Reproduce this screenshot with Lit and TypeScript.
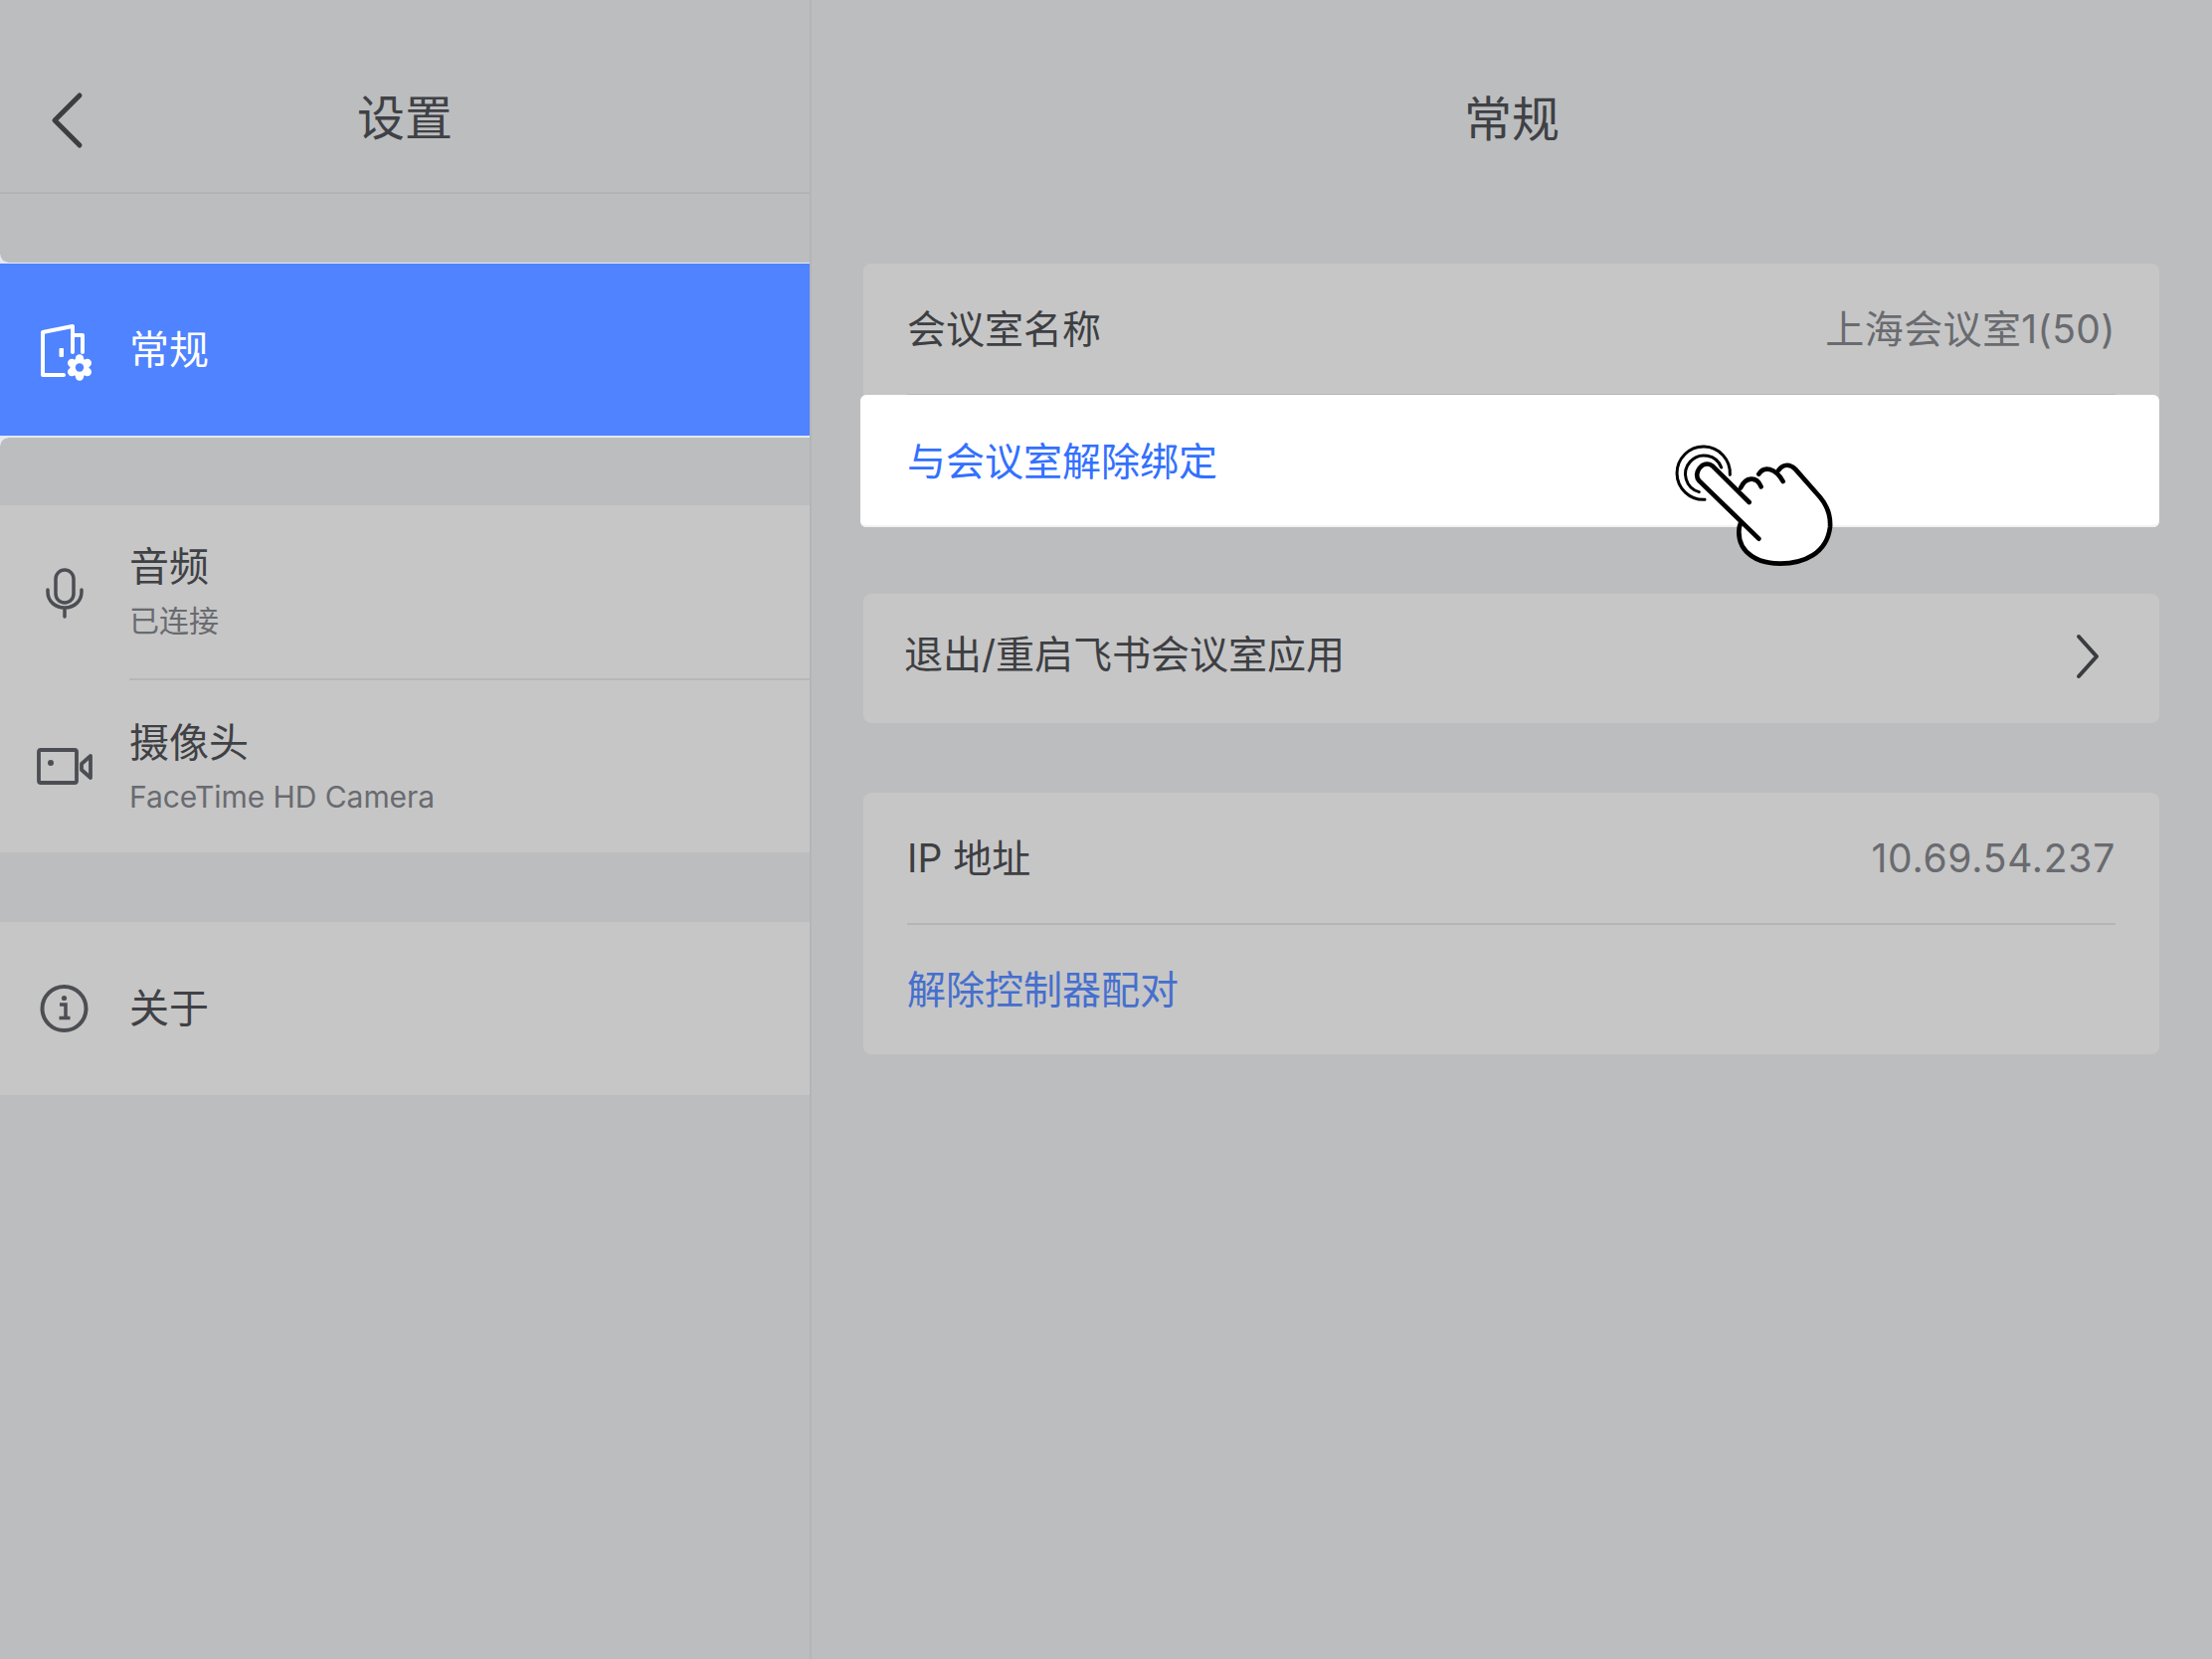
import { LitElement, html, css, svg } from "lit";
import { customElement } from "lit/decorators.js";

const gearLobes = [90, 30, -30, -90, -150, 150].map((a) => {
  const r = (a * Math.PI) / 180;
  return svg`<circle cx=${60 + 9 * Math.cos(r)} cy=${67.5 + 9 * Math.sin(r)} r="4.2" fill="currentColor"/>`;
});
const door = svg`<path d="M44 75H23V32L53 26V52M54 35H63V52" fill="none" stroke="currentColor" stroke-width="4" stroke-linejoin="round" stroke-linecap="round"/><rect x="39.5" y="48" width="4.5" height="9" rx="1" fill="currentColor"/>${gearLobes}<circle cx="60" cy="67.5" r="9.5" fill="currentColor"/><circle cx="60" cy="67.5" r="4.2" fill="#4f83ff"/>`;
const mic = svg`<g fill="none" stroke="currentColor" stroke-width="3.5" stroke-linecap="round"><rect x="36" y="28" width="18" height="33" rx="9"/><path d="M28 48V50C28 59 35 66 45 66C55 66 62 59 62 50V48M45 66V75"/></g>`;
const cam = svg`<g fill="none" stroke="currentColor" stroke-width="3.8" stroke-linejoin="round"><rect x="19" y="34" width="38" height="33" rx="2"/><path d="M71 40L62 48V54L71 62Z"/></g><circle cx="31" cy="47" r="3" fill="currentColor"/>`;
const info = svg`<circle cx="44.5" cy="50" r="22" fill="none" stroke="currentColor" stroke-width="4"/><circle cx="44.5" cy="39.5" r="2.6" fill="currentColor"/><path d="M40 46H46V59M39.5 59.5H50.5" fill="none" stroke="currentColor" stroke-width="3.5"/>`;

@customElement("app-root")
export class AppRoot extends LitElement {
  static styles = css`
    :host {
      display: grid;
      grid-template-columns: 814px 2px 1fr;
      width: 2224px;
      height: 1668px;
      background: #bcbdbf;
      color: #3d3f43;
      font-family: Inter, "Noto Sans CJK SC", sans-serif;
      font-size: 40px;
      overflow: hidden;
    }
    .rule { background: #b4b5b7; }
    .head {
      height: 195px;
      box-sizing: border-box;
      display: flex;
      align-items: center;
      justify-content: center;
      position: relative;
      font-size: 48px;
      padding-top: 36px;
      color: #3f4145;
    }
    .side .head { border-bottom: 2px solid #b2b3b5; }
    .back { position: absolute; left: 50px; top: 92px; width: 36px; height: 58px; color: #3c3e42; }
    .nav { display: flex; flex-direction: column; gap: 70px; padding-top: 70px; }
    .group { background: #c6c6c6; }
    .blue { background: none; }
    .item {
      height: 173px;
      display: flex;
      align-items: center;
      padding-left: 20px;
      gap: 20px;
      color: #3f4145;
    }
    .item.first { height: 174px; }
    .item.second { height: 175px; }
    .item.last { height: 174px; }
    .item.on {
      background: #4f83ff;
      color: #fff;
      box-shadow: 0 -1px 0 #e4e9f3, 0 2px 0 #e4e9f3;
      position: relative;
    }
    .item.on::before,
    .item.on::after {
      content: "";
      position: absolute;
      left: 0;
      width: 8px;
      height: 8px;
    }
    .item.on::before {
      top: -9px;
      background: radial-gradient(circle at 100% 0, transparent 7px, #e4e9f3 8px);
    }
    .item.on::after {
      bottom: -10px;
      background: radial-gradient(circle at 100% 100%, transparent 7px, #e4e9f3 8px);
    }
    .ico { width: 90px; height: 100px; flex: none; color: #4c4e53; display: block; }
    .on .ico { color: #fff; }
    .labels { display: flex; flex-direction: column; flex: 1; align-self: stretch; justify-content: center; gap: 10px; line-height: 48px; }
    .bordered { border-top: 2px solid #b6b7b8; padding-top: 2px; }
    .sub { font-size: 30px; line-height: 40px; color: #696b70; letter-spacing: -0.05px; }
    .cards { display: flex; flex-direction: column; padding: 70px 53px 0 52px; font-size: 39px; }
    .card { background: #c6c6c6; border-radius: 8px; display: flex; flex-direction: column; }
    .c1 { margin-bottom: 68px; }
    .c2 { margin-bottom: 70px; }
    .row {
      height: 131px;
      box-sizing: border-box;
      display: flex;
      align-items: center;
      justify-content: space-between;
      padding: 0 44px 6px;
      flex: none;
    }
    .row.short { height: 130px; padding: 0 58px 0 41px; }
    .row.short .txt { margin-bottom: 14px; }
    .row.short .chev { margin-bottom: 4px; }
    .line { height: 2px; background: #b4b5b6; margin: 0 44px; }
    .val { color: #696b70; font-size: 39px; letter-spacing: 0.4px; }
    .val.ip { letter-spacing: 0.75px; margin-top: 6px; }
    .pressed {
      background: #fff;
      margin: -1px 0 -1px -3px;
      height: 133px;
      border-radius: 6px;
      padding-left: 47px;
      color: #3370ff;
      box-shadow: inset 0 -2px 0 #f2f2f3;
    }
    .link { color: #456fce; height: 130px; }
    .chev { width: 28px; height: 48px; color: #3a3c40; }
    .hand { position: absolute; left: 1640px; top: 420px; width: 240px; height: 170px; }
  `;

  render() {
    return html`
      <div class="side">
        <div class="head">
          <svg class="back" viewBox="0 0 36 58"><path d="M30 4L5 29L30 54" fill="none" stroke="currentColor" stroke-width="5" stroke-linecap="round" stroke-linejoin="round"/></svg>
          设置
        </div>
        <div class="nav">
          <div class="group blue">
            <div class="item on"><svg class="ico" viewBox="0 0 90 100">${door}</svg><div class="labels">常规</div></div>
          </div>
          <div class="group">
            <div class="item first">
              <svg class="ico" viewBox="0 0 90 100">${mic}</svg>
              <div class="labels"><span>音频</span><span class="sub">已连接</span></div>
            </div>
            <div class="item second">
              <svg class="ico" viewBox="0 0 90 100">${cam}</svg>
              <div class="labels bordered"><span>摄像头</span><span class="sub">FaceTime HD Camera</span></div>
            </div>
          </div>
          <div class="group">
            <div class="item last"><svg class="ico" viewBox="0 0 90 100">${info}</svg><div class="labels">关于</div></div>
          </div>
        </div>
      </div>
      <div class="rule"></div>
      <div class="main">
        <div class="head">常规</div>
        <div class="cards">
          <div class="card c1">
            <div class="row"><span>会议室名称</span><span class="val">上海会议室1(50)</span></div>
            <div class="line"></div>
            <div class="row pressed">与会议室解除绑定</div>
          </div>
          <div class="card c2">
            <div class="row short"><span class="txt">退出/重启飞书会议室应用</span>
              <svg class="chev" viewBox="0 0 28 48"><path d="M5 4L23 24L5 44" fill="none" stroke="currentColor" stroke-width="4" stroke-linecap="round" stroke-linejoin="round"/></svg>
            </div>
          </div>
          <div class="card">
            <div class="row"><span>IP 地址</span><span class="val ip">10.69.54.237</span></div>
            <div class="line"></div>
            <div class="row link">解除控制器配对</div>
          </div>
        </div>
      </div>
      <svg class="hand" viewBox="0 0 720 510">
        <g fill="none" stroke="#000" stroke-linecap="round" stroke-linejoin="round">
          <path d="M298 172A80 80 0 1 0 222 247" stroke-width="9"/>
          <path d="M272 150A56 56 0 1 0 205 224" stroke-width="9"/>
          <path d="M385 365L205 190C185 168 215 125 245 145L330 225C335 190 375 170 392 208C375 165 425 130 458 192C435 150 475 125 495 155L570 240C595 270 602 300 600 330C590 410 520 440 450 440C385 440 325 410 325 345C325 335 327 325 330 318Z" fill="#fff" stroke="none"/>
          <path d="M385 365L205 190C185 168 215 125 245 145L356 255" stroke-width="14"/>
          <path d="M330 212C345 178 378 175 392 208" stroke-width="14"/>
          <path d="M385 170C400 145 435 150 458 192" stroke-width="14"/>
          <path d="M445 158C460 138 480 140 495 155L570 240C595 270 602 300 600 330C590 410 520 440 450 440C385 440 325 410 325 345C325 335 327 325 330 318" stroke-width="14"/>
        </g>
      </svg>
    `;
  }
}
